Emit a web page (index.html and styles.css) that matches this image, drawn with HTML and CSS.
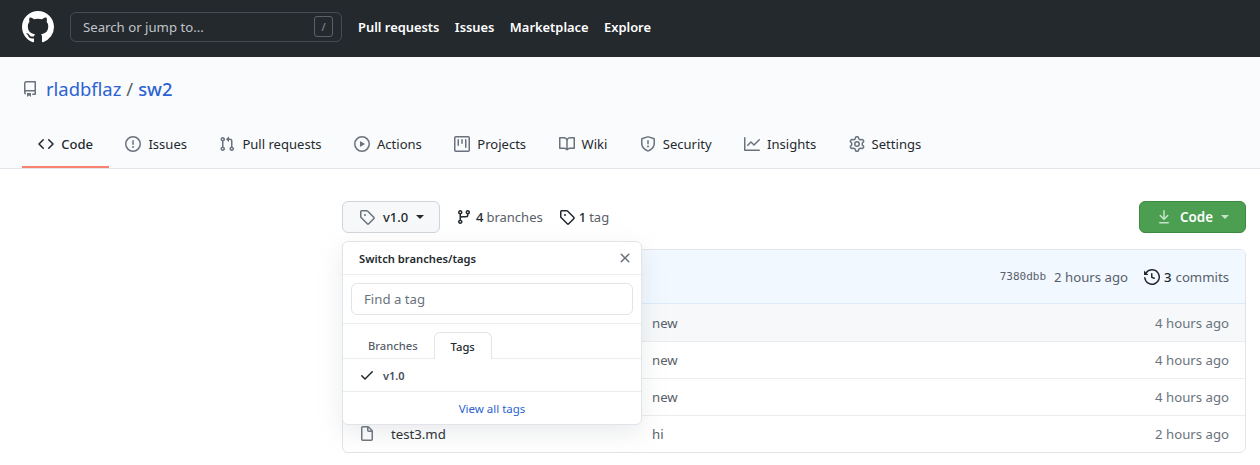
FILE: index.html
```html
<!DOCTYPE html>
<html lang="en">
<head>
<meta charset="utf-8">
<title>rladbflaz/sw2</title>
<link rel="stylesheet" href="styles.css">
</head>
<body>
<svg class="sprite" aria-hidden="true">
<symbol id="i-mark" viewBox="0 0 16 16"><path d="M8 0C3.58 0 0 3.58 0 8c0 3.54 2.29 6.53 5.47 7.59.4.07.55-.17.55-.38 0-.19-.01-.82-.01-1.49-2.01.37-2.53-.49-2.69-.94-.09-.23-.48-.94-.82-1.13-.28-.15-.68-.52-.01-.53.63-.01 1.08.58 1.23.82.72 1.21 1.87.87 2.33.66.07-.52.28-.87.51-1.07-1.78-.2-3.64-.89-3.64-3.95 0-.87.31-1.59.82-2.15-.08-.2-.36-1.02.08-2.12 0 0 .67-.21 2.2.82.64-.18 1.32-.27 2-.27.68 0 1.36.09 2 .27 1.53-1.04 2.2-.82 2.2-.82.44 1.1.16 1.92.08 2.12.51.56.82 1.27.82 2.15 0 3.07-1.87 3.75-3.65 3.95.29.25.54.73.54 1.48 0 1.07-.01 1.93-.01 2.2 0 .21.15.46.55.38A8.013 8.013 0 0016 8c0-4.42-3.58-8-8-8z"/></symbol>
<symbol id="i-repo" viewBox="0 0 16 16"><path fill-rule="evenodd" d="M2 2.5A2.5 2.5 0 014.5 0h8.75a.75.75 0 01.75.75v12.5a.75.75 0 01-.75.75h-2.5a.75.75 0 110-1.5h1.75v-2h-8a1 1 0 00-.714 1.7.75.75 0 01-1.072 1.05A2.495 2.495 0 012 11.5v-9zm10.5-1V9h-8c-.356 0-.694.074-1 .208V2.5a1 1 0 011-1h8zM5 12.25v3.25a.25.25 0 00.4.2l1.45-1.087a.25.25 0 01.3 0L8.6 15.7a.25.25 0 00.4-.2v-3.25a.25.25 0 00-.25-.25h-3.5a.25.25 0 00-.25.25z"/></symbol>
<symbol id="i-code" viewBox="0 0 16 16"><path fill-rule="evenodd" d="M4.72 3.22a.75.75 0 011.06 1.06L2.06 8l3.72 3.72a.75.75 0 11-1.06 1.06L.47 8.53a.75.75 0 010-1.06l4.25-4.25zm6.56 0a.75.75 0 10-1.06 1.06L13.94 8l-3.72 3.72a.75.75 0 101.06 1.06l4.25-4.25a.75.75 0 000-1.06l-4.25-4.25z"/></symbol>
<symbol id="i-issue" viewBox="0 0 16 16"><path fill-rule="evenodd" d="M8 1.5a6.5 6.5 0 100 13 6.5 6.5 0 000-13zM0 8a8 8 0 1116 0A8 8 0 010 8zm9 3a1 1 0 11-2 0 1 1 0 012 0zm-.25-6.25a.75.75 0 00-1.5 0v3.5a.75.75 0 001.5 0v-3.5z"/></symbol>
<symbol id="i-pr" viewBox="0 0 16 16"><path fill-rule="evenodd" d="M7.177 3.073L9.573.677A.25.25 0 0110 .854v4.792a.25.25 0 01-.427.177L7.177 3.427a.25.25 0 010-.354zM3.75 2.5a.75.75 0 100 1.5.75.75 0 000-1.5zm-2.25.75a2.25 2.25 0 113 2.122v5.256a2.251 2.251 0 11-1.5 0V5.372A2.25 2.25 0 011.5 3.25zM11 2.5h-1V4h1a1 1 0 011 1v5.628a2.251 2.251 0 101.5 0V5A2.5 2.5 0 0011 2.5zm1 10.25a.75.75 0 111.5 0 .75.75 0 01-1.5 0zM3.75 12a.75.75 0 100 1.5.75.75 0 000-1.5z"/></symbol>
<symbol id="i-play" viewBox="0 0 16 16"><path fill-rule="evenodd" d="M1.5 8a6.5 6.5 0 1113 0 6.5 6.5 0 01-13 0zM8 0a8 8 0 100 16A8 8 0 008 0zM6.379 5.227A.25.25 0 006 5.442v5.117a.25.25 0 00.379.214l4.264-2.559a.25.25 0 000-.428L6.379 5.227z"/></symbol>
<symbol id="i-project" viewBox="0 0 16 16"><path fill-rule="evenodd" d="M1.75 0A1.75 1.75 0 000 1.75v12.5C0 15.216.784 16 1.75 16h12.5A1.75 1.75 0 0016 14.25V1.75A1.75 1.75 0 0014.25 0H1.75zM1.5 1.75a.25.25 0 01.25-.25h12.5a.25.25 0 01.25.25v12.5a.25.25 0 01-.25.25H1.75a.25.25 0 01-.25-.25V1.75zM11.75 3a.75.75 0 00-.75.75v7.5a.75.75 0 001.5 0v-7.5a.75.75 0 00-.75-.75zm-8.25.75a.75.75 0 011.5 0v5.5a.75.75 0 01-1.5 0v-5.5zM8 3a.75.75 0 00-.75.75v3.5a.75.75 0 001.5 0v-3.5A.75.75 0 008 3z"/></symbol>
<symbol id="i-book" viewBox="0 0 16 16"><path fill-rule="evenodd" d="M0 1.75A.75.75 0 01.75 1h4.253c1.227 0 2.317.59 3 1.501A3.744 3.744 0 0111.006 1h4.245a.75.75 0 01.75.75v10.5a.75.75 0 01-.75.75h-4.507a2.25 2.25 0 00-1.591.659l-.622.621a.75.75 0 01-1.06 0l-.622-.621A2.25 2.25 0 005.258 13H.75a.75.75 0 01-.75-.75V1.75zm8.755 3a2.25 2.25 0 012.25-2.25H14.5v9h-3.757c-.71 0-1.4.201-1.992.572l.004-7.322zm-1.504 7.324l.004-5.073-.002-2.253A2.25 2.25 0 005.003 2.5H1.5v9h3.757a3.75 3.75 0 011.994.574z"/></symbol>
<symbol id="i-shield" viewBox="0 0 16 16"><path fill-rule="evenodd" d="M7.467.133a1.75 1.75 0 011.066 0l5.25 1.68A1.75 1.75 0 0115 3.48V7c0 1.566-.32 3.182-1.303 4.682-.983 1.498-2.585 2.813-5.032 3.855a1.7 1.7 0 01-1.33 0c-2.447-1.042-4.049-2.357-5.032-3.855C1.32 10.182 1 8.566 1 7V3.48a1.75 1.75 0 011.217-1.667l5.25-1.68zm.61 1.429a.25.25 0 00-.153 0l-5.25 1.68a.25.25 0 00-.174.238V7c0 1.358.275 2.666 1.057 3.86.784 1.194 2.121 2.34 4.366 3.297a.2.2 0 00.154 0c2.245-.956 3.582-2.104 4.366-3.298C13.225 9.666 13.5 8.36 13.5 7V3.48a.25.25 0 00-.174-.237l-5.25-1.68zM9 10.5a1 1 0 11-2 0 1 1 0 012 0zm-.25-5.75a.75.75 0 10-1.5 0v3a.75.75 0 001.5 0v-3z"/></symbol>
<symbol id="i-graph" viewBox="0 0 16 16"><path fill-rule="evenodd" d="M1.5 1.75a.75.75 0 00-1.5 0v12.5c0 .414.336.75.75.75h14.5a.75.75 0 000-1.5H1.5V1.75zm14.28 2.53a.75.75 0 00-1.06-1.06L10 7.94 7.53 5.47a.75.75 0 00-1.06 0L3.22 8.72a.75.75 0 001.06 1.06L7 7.06l2.47 2.47a.75.75 0 001.06 0l5.25-5.25z"/></symbol>
<symbol id="i-gear" viewBox="0 0 16 16"><path fill-rule="evenodd" d="M7.429 1.525a6.593 6.593 0 011.142 0c.036.003.108.036.137.146l.289 1.105c.147.56.55.967.997 1.189.174.086.341.183.501.29.417.278.97.423 1.53.27l1.102-.303c.11-.03.175.016.195.046.219.31.41.641.573.989.014.031.022.11-.059.19l-.815.806c-.411.406-.562.957-.53 1.456a4.588 4.588 0 010 .582c-.032.499.119 1.05.53 1.456l.815.806c.08.08.073.159.059.19a6.494 6.494 0 01-.573.99c-.02.029-.086.074-.195.045l-1.103-.303c-.559-.153-1.112-.008-1.529.27-.16.107-.327.204-.5.29-.449.222-.851.628-.998 1.189l-.289 1.105c-.029.11-.101.143-.137.146a6.613 6.613 0 01-1.142 0c-.036-.003-.108-.037-.137-.146l-.289-1.105c-.147-.56-.55-.967-.997-1.189a4.502 4.502 0 01-.501-.29c-.417-.278-.97-.423-1.53-.27l-1.102.303c-.11.03-.175-.016-.195-.046a6.492 6.492 0 01-.573-.989c-.014-.031-.022-.11.059-.19l.815-.806c.411-.406.562-.957.53-1.456a4.587 4.587 0 010-.582c.032-.499-.119-1.05-.53-1.456l-.815-.806c-.08-.08-.073-.159-.059-.19a6.44 6.44 0 01.573-.99c.02-.029.086-.075.195-.045l1.103.303c.559.153 1.112.008 1.529-.27.16-.107.327-.204.5-.29.449-.222.851-.628.998-1.189l.289-1.105c.029-.11.101-.143.137-.146zM8 0c-.236 0-.47.01-.701.03-.743.065-1.29.615-1.458 1.261l-.29 1.106c-.017.066-.078.158-.211.224a5.994 5.994 0 00-.668.386c-.123.082-.233.09-.3.071L3.27 2.776c-.644-.177-1.392.02-1.82.63a7.977 7.977 0 00-.704 1.217c-.315.675-.111 1.422.363 1.891l.815.806c.05.048.098.147.088.294a6.084 6.084 0 000 .772c.01.147-.038.246-.088.294l-.815.806c-.474.469-.678 1.216-.363 1.891.2.428.436.835.704 1.218.428.609 1.176.806 1.82.63l1.103-.303c.066-.019.176-.011.299.071.213.143.436.272.668.386.133.066.194.158.212.224l.289 1.106c.169.646.715 1.196 1.458 1.26a8.094 8.094 0 001.402 0c.743-.064 1.29-.614 1.458-1.26l.29-1.106c.017-.066.078-.158.211-.224a5.98 5.98 0 00.668-.386c.123-.082.233-.09.3-.071l1.102.302c.644.177 1.392-.02 1.82-.63.268-.382.505-.789.704-1.217.315-.675.111-1.422-.364-1.891l-.814-.806c-.05-.048-.098-.147-.088-.294a6.1 6.1 0 000-.772c-.01-.147.039-.246.088-.294l.814-.806c.475-.469.679-1.216.364-1.891a7.992 7.992 0 00-.704-1.218c-.428-.609-1.176-.806-1.82-.63l-1.103.303c-.066.019-.176.011-.299-.071a5.991 5.991 0 00-.668-.386c-.133-.066-.194-.158-.212-.224L10.16 1.29C9.99.645 9.444.095 8.701.031A8.094 8.094 0 008 0zm1.5 8a1.5 1.5 0 11-3 0 1.5 1.5 0 013 0zM11 8a3 3 0 11-6 0 3 3 0 016 0z"/></symbol>
<symbol id="i-tag" viewBox="0 0 16 16"><path fill-rule="evenodd" d="M2.5 7.775V2.75a.25.25 0 01.25-.25h5.025a.25.25 0 01.177.073l6.25 6.25a.25.25 0 010 .354l-5.025 5.025a.25.25 0 01-.354 0l-6.25-6.25a.25.25 0 01-.073-.177zm-1.5 0V2.75C1 1.784 1.784 1 2.75 1h5.025c.464 0 .91.184 1.238.513l6.25 6.25a1.75 1.75 0 010 2.474l-5.026 5.026a1.75 1.75 0 01-2.474 0l-6.25-6.25A1.75 1.75 0 011 7.775zM6 5a1 1 0 100 2 1 1 0 000-2z"/></symbol>
<symbol id="i-branch" viewBox="0 0 16 16"><path fill-rule="evenodd" d="M11.75 2.5a.75.75 0 100 1.5.75.75 0 000-1.5zm-2.25.75a2.25 2.25 0 113 2.122V6A2.5 2.5 0 0110 8.5H6a1 1 0 00-1 1v1.128a2.251 2.251 0 11-1.5 0V5.372a2.25 2.25 0 111.5 0v1.836A2.492 2.492 0 016 7h4a1 1 0 001-1v-.628A2.25 2.25 0 019.5 3.25zM4.25 12a.75.75 0 100 1.5.75.75 0 000-1.5zM3.5 3.25a.75.75 0 111.5 0 .75.75 0 01-1.5 0z"/></symbol>
<symbol id="i-history" viewBox="0 0 16 16"><path fill-rule="evenodd" d="M1.643 3.143L.427 1.927A.25.25 0 000 2.104V5.75c0 .138.112.25.25.25h3.646a.25.25 0 00.177-.427L2.715 4.215a6.5 6.5 0 11-1.18 4.458.75.75 0 10-1.493.154 8.001 8.001 0 101.6-5.684zM7.75 4a.75.75 0 01.75.75v2.992l2.028.812a.75.75 0 01-.557 1.392l-2.5-1A.75.75 0 017 8.25v-3.5A.75.75 0 017.75 4z"/></symbol>
<symbol id="i-file" viewBox="0 0 16 16"><path fill-rule="evenodd" d="M3.75 1.5a.25.25 0 00-.25.25v11.5c0 .138.112.25.25.25h8.5a.25.25 0 00.25-.25V6H9.75A1.75 1.75 0 018 4.25V1.5H3.75zm5.75.56v2.19c0 .138.112.25.25.25h2.19L9.5 2.06zM2 1.75C2 .784 2.784 0 3.75 0h5.086c.464 0 .909.184 1.237.513l3.414 3.414c.329.328.513.773.513 1.237v8.086A1.75 1.75 0 0112.25 15h-8.5A1.75 1.75 0 012 13.25V1.75z"/></symbol>
<symbol id="i-x" viewBox="0 0 16 16"><path fill-rule="evenodd" d="M3.72 3.72a.75.75 0 011.06 0L8 6.94l3.22-3.22a.75.75 0 111.06 1.06L9.06 8l3.22 3.22a.75.75 0 11-1.06 1.06L8 9.06l-3.22 3.22a.75.75 0 01-1.06-1.06L6.94 8 3.72 4.78a.75.75 0 010-1.06z"/></symbol>
<symbol id="i-check" viewBox="0 0 16 16"><path fill-rule="evenodd" d="M13.78 4.22a.75.75 0 010 1.06l-7.25 7.25a.75.75 0 01-1.06 0L2.22 9.28a.75.75 0 011.06-1.06L6 10.94l6.72-6.72a.75.75 0 011.06 0z"/></symbol>
<symbol id="i-download" viewBox="0 0 16 16"><path fill-rule="evenodd" d="M7.47 10.78a.75.75 0 001.06 0l3.75-3.75a.75.75 0 00-1.06-1.06L8.75 8.44V1.75a.75.75 0 00-1.5 0v6.69L4.78 5.97a.75.75 0 00-1.06 1.06l3.75 3.75zM3.75 13a.75.75 0 000 1.5h8.5a.75.75 0 000-1.5h-8.5z"/></symbol>
</svg>

<header class="topbar">
  <svg class="logo"><use href="#i-mark"/></svg>
  <div class="search"><span>Search or jump to...</span><kbd class="slash">/</kbd></div>
  <nav class="topnav"><a>Pull requests</a><a>Issues</a><a>Marketplace</a><a>Explore</a></nav>
</header>

<section class="pagehead">
  <h1 class="repo-title">
    <svg class="ico repo-ico"><use href="#i-repo"/></svg>
    <a class="owner">rladbflaz</a><span class="sep">/</span><a class="name">sw2</a>
  </h1>
  <nav class="tabs">
    <a class="tab selected"><svg class="ico dark"><use href="#i-code"/></svg>Code</a>
    <a class="tab"><svg class="ico"><use href="#i-issue"/></svg>Issues</a>
    <a class="tab"><svg class="ico"><use href="#i-pr"/></svg>Pull requests</a>
    <a class="tab"><svg class="ico"><use href="#i-play"/></svg>Actions</a>
    <a class="tab"><svg class="ico"><use href="#i-project"/></svg>Projects</a>
    <a class="tab"><svg class="ico"><use href="#i-book"/></svg>Wiki</a>
    <a class="tab"><svg class="ico"><use href="#i-shield"/></svg>Security</a>
    <a class="tab"><svg class="ico"><use href="#i-graph"/></svg>Insights</a>
    <a class="tab"><svg class="ico"><use href="#i-gear"/></svg>Settings</a>
  </nav>
</section>

<main class="content">
  <div class="toolbar">
    <button class="btn-tag"><svg class="ico"><use href="#i-tag"/></svg><span>v1.0</span><i class="caret"></i></button>
    <a class="stat branches"><svg class="ico dark"><use href="#i-branch"/></svg><b>4</b> branches</a>
    <a class="stat"><svg class="ico dark"><use href="#i-tag"/></svg><b>1</b> tag</a>
    <button class="btn-code"><svg class="ico"><use href="#i-download"/></svg><span>Code</span><i class="caret"></i></button>
  </div>

  <div class="files">
    <div class="commit-head">
      <code>7380dbb</code><span class="age">2 hours ago</span>
      <a class="commits"><svg class="ico dark"><use href="#i-history"/></svg><b>3</b> commits</a>
    </div>
    <div class="row hover"><span class="fname"></span><span class="msg">new</span><span class="when">4 hours ago</span></div>
    <div class="row"><span class="fname"></span><span class="msg">new</span><span class="when">4 hours ago</span></div>
    <div class="row"><span class="fname"></span><span class="msg">new</span><span class="when">4 hours ago</span></div>
    <div class="row"><span class="fname"><svg class="ico"><use href="#i-file"/></svg>test3.md</span><span class="msg">hi</span><span class="when">2 hours ago</span></div>
  </div>

  <div class="popover">
    <div class="pop-head"><span>Switch branches/tags</span><svg class="ico"><use href="#i-x"/></svg></div>
    <div class="pop-filter"><div class="pop-input">Find a tag</div></div>
    <div class="pop-tabs"><span class="pop-tab">Branches</span><span class="pop-tab active">Tags</span></div>
    <div class="pop-item"><svg class="ico dark"><use href="#i-check"/></svg><span>v1.0</span></div>
    <a class="pop-foot">View all tags</a>
  </div>
</main>
</body>
</html>
```

FILE: styles.css
```css
* { box-sizing: border-box; }
html, body { margin: 0; padding: 0; }
body {
  font-family: "Noto Sans", "Open Sans", sans-serif;
  font-size: 13.2px;
  color: #24292e;
  background: #fff;
  height: 465px;
  overflow: hidden;
}
a { color: inherit; text-decoration: none; }
.sprite { display: none; }
.ico { width: 16px; height: 16px; fill: #6a737d; flex: none; display: block; }
.ico.dark { fill: #24292e; }

.topbar {
  height: 57px;
  background: #24292e;
  display: flex;
  align-items: center;
  padding: 0 22px;
}
.logo { width: 32px; height: 32px; fill: #fff; display: block; margin-top: -3px; }
.search {
  margin-left: 16px;
  width: 272px;
  height: 30px;
  margin-top: -4px;
  border: 1px solid #444d56;
  border-radius: 6px;
  display: flex;
  align-items: center;
  justify-content: space-between;
  padding: 0 8px 0 12px;
  color: #c0c4c8;
  font-size: 13.2px;
}
.slash {
  width: 19px; height: 21px;
  border: 1px solid #5a6269;
  border-radius: 3px;
  font-family: inherit;
  font-size: 11px;
  text-align: center;
  line-height: 19px;
  color: #8a9095;
}
.topnav { display: flex; gap: 15.4px; margin-left: 16px; margin-top: -3px; }
.topnav a { color: #fff; font-weight: 600; font-size: 12.9px; }

.pagehead {
  height: 112px;
  background: #fafbfc;
  border-bottom: 1px solid #e1e4e8;
  padding: 0 22px;
  display: flex;
  flex-direction: column;
}
.repo-title {
  margin: 17px 0 0;
  height: 30px;
  display: flex;
  align-items: center;
  font-weight: 400;
  font-size: 18.4px;
  color: #586069;
}
.repo-ico { margin-right: 8px; }
.owner { color: #2b62d3; }
.sep { margin: 0 5px; }
.name { color: #2b62d3; font-weight: 500; }

.tabs { display: flex; margin-top: 28px; height: 37px; }
.tab {
  display: flex;
  align-items: flex-start;
  gap: 7px;
  padding: 3px 16.2px 0;
  line-height: 20px;
  height: 37px;
  color: #24292e;
  font-size: 13.05px;
  border-bottom: 2px solid transparent;
}
.tab .ico { margin-top: 2px; }
.tab.selected { font-weight: 500; border-bottom-color: #f9826c; }

.content { position: relative; padding: 32px 14px 0 342px; }
.toolbar { display: flex; align-items: center; height: 32px; }
.btn-tag {
  width: 98px; height: 32px;
  display: flex; align-items: center;
  padding: 0 16px;
  gap: 8px;
  background: #f6f8fa;
  border: 1px solid #d1d5da;
  border-radius: 6px;
  font: 500 13px "Noto Sans", sans-serif;
  color: #24292e;
}
.caret { width: 0; height: 0; border: 4px solid transparent; border-top-color: currentColor; border-bottom: 0; }
.stat { display: flex; align-items: center; gap: 3px; color: #586069; font-size: 13px; margin-left: 16px; }
.stat b { color: #24292e; font-weight: 500; }
.stat .ico { margin-right: 1px; }
.btn-code {
  margin-left: auto;
  width: 107px; height: 32px;
  display: flex; align-items: center;
  padding: 0 16px;
  gap: 8px;
  background: #4c9e50;
  border: 1px solid #3d8a41;
  border-radius: 6px;
  color: #fff;
  font: 600 13.4px "Noto Sans", sans-serif;
}
.btn-code .ico { fill: #c6e5c8; }
.btn-code .caret { opacity: .7; }

.files {
  margin-top: 16px;
  border: 1px solid #e1e4e8;
  border-radius: 6px;
  overflow: hidden;
}
.commit-head {
  height: 54px;
  background: #f1f8ff;
  border-bottom: 1px solid #dbe9f8;
  display: flex;
  align-items: center;
  justify-content: flex-end;
  padding: 0 16px;
  color: #586069;
  font-size: 13.2px;
}
.commit-head code { font-family: "DejaVu Sans Mono", "Liberation Mono", monospace; font-size: 11px; }
.age { margin-left: 8px; }
.commits { display: flex; align-items: center; gap: 4px; margin-left: 16px; }
.commits b { color: #24292e; font-weight: 500; }
.row {
  height: 37px;
  display: flex;
  align-items: center;
  padding: 0 16px;
  border-top: 1px solid #eaecef;
  font-size: 13.2px;
}
.commit-head + .row { border-top: 0; }
.row.hover { background: #f6f8fa; }
.fname { width: 293px; display: flex; gap: 16px; align-items: center; color: #24292e; }
.msg { flex: 1; color: #586069; }
.when { color: #6a737d; }

.popover {
  position: absolute;
  left: 342px;
  top: 72px;
  width: 300px;
  height: 184px;
  background: #fff;
  border: 1px solid #e1e4e8;
  border-radius: 6px;
  box-shadow: 0 8px 24px rgba(149,157,165,.2);
  font-size: 11.2px;
}
.pop-head {
  height: 33px;
  display: flex; align-items: center; justify-content: space-between;
  padding: 0 8px 0 16px;
  border-bottom: 1px solid #eaecef;
  font-weight: 600;
}
.pop-filter {
  height: 49px;
  padding: 8px;
  border-bottom: 1px solid #eaecef;
}
.pop-input {
  height: 32px;
  border: 1px solid #e1e4e8;
  border-radius: 6px;
  padding: 0 12px;
  line-height: 30px;
  font-size: 13.2px;
  color: #6a737d;
}
.pop-tabs {
  height: 35px;
  padding: 8px 8px 0 9px;
  display: flex;
  border-bottom: 1px solid #eaecef;
}
.pop-tab {
  padding: 0 16px;
  line-height: 27px;
  color: #586069;
  font-weight: 500;
  height: 27px;
  font-size: 11.2px;
}
.pop-tab.active {
  height: 27px;
  padding: 0 16px;
  color: #24292e;
  background: #fff;
  border: 1px solid #e1e4e8;
  border-bottom: 0;
  border-radius: 6px 6px 0 0;
  box-shadow: 0 1px 0 #fff;
  position: relative;
}
.pop-item {
  height: 33px;
  display: flex; align-items: center; gap: 8px;
  padding: 0 16px;
  border-bottom: 1px solid #eaecef;
  font-weight: 600;
  font-size: 11px;
  color: #444d56;
}
.pop-foot {
  display: block;
  text-align: center;
  line-height: 33px;
  color: #2b62d3;
  font-size: 11.5px;
}
```
